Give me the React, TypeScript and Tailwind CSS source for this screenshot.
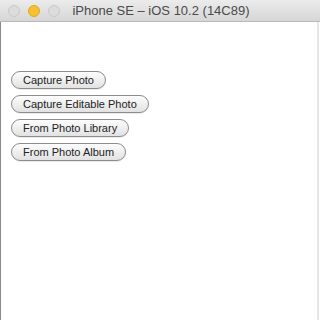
const buttons = [
  'Capture Photo',
  'Capture Editable Photo',
  'From Photo Library',
  'From Photo Album',
];

function Light({ color }: { color: string }) {
  return <span className={`w-[12px] h-[12px] rounded-full border ${color}`} />;
}

export default function App() {
  return (
    <div className="w-[320px] h-[320px] bg-white flex flex-col font-['Liberation_Sans',Arial,sans-serif] overflow-hidden">
      <div className="h-[22px] flex items-center relative bg-gradient-to-b from-[#ececec] to-[#d6d6d6] border-b border-[#b9b9b9]">
        <div className="flex items-center gap-[8px] pl-[8px]">
          <Light color="bg-[#dcdcdc] border-[#c8c8c8]" />
          <Light color="bg-[#f5c12e] border-[#e0a826]" />
          <Light color="bg-[#dcdcdc] border-[#c8c8c8]" />
        </div>
        <div className="absolute inset-0 flex items-center justify-center pl-[2px] text-[13px] text-[#4a4a4a]">
          iPhone SE – iOS 10.2 (14C89)
        </div>
      </div>
      <div className="flex-1 flex border-l border-[#8a8a8a] border-r-2 border-r-[#e6e6e6] mr-[1px]">
        <div className="flex flex-col items-start gap-[6px] pt-[49px] pl-[10px]">
          {buttons.map(b => (
            <button
              key={b}
              className="h-[18px] px-[11px] rounded-full border border-[#8c8c8c] bg-gradient-to-b from-[#fdfdfd] to-[#e2e2e2] text-[11px] leading-none text-[#222] shadow-[0_1px_0_rgba(0,0,0,0.08)]"
            >
              {b}
            </button>
          ))}
        </div>
      </div>
    </div>
  );
}
